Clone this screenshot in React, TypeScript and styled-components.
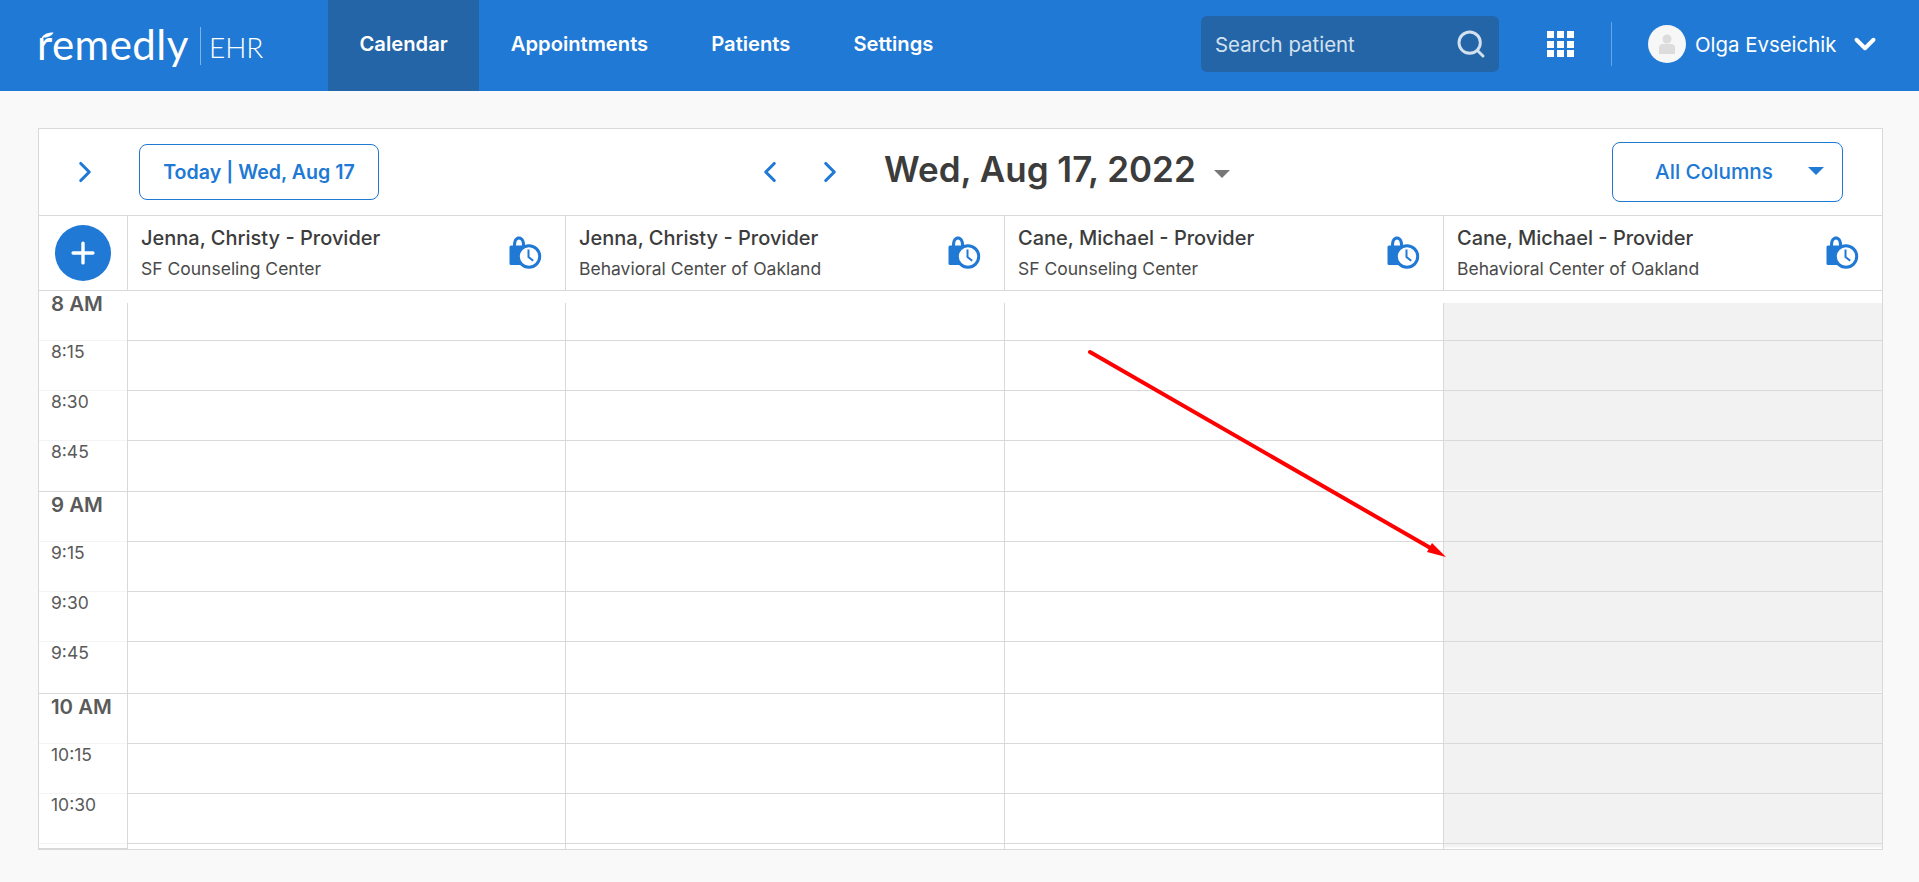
import React from "react";
import styled, { createGlobalStyle } from "styled-components";
import { ChevronLeft, ChevronRight, ChevronDown, Plus, Search } from "lucide-react";

const blue = "#2079d4";
const line = "#d9d9d9";

const Global = createGlobalStyle`
  html, body { margin: 0; padding: 0; background: #f9f9f9; }
  body { font-family: "Inter", "Liberation Sans", sans-serif; color: #3c3c3c; }
  * { box-sizing: border-box; }
`;
const Page = styled.div`position: relative; width: 1919px; height: 882px; overflow: hidden; display: flex; flex-direction: column;`;
const TopBar = styled.header`height: 91px; background: ${blue}; display: flex; align-items: stretch; color: #fff;`;
const Logo = styled.div`width: 328px; display: flex; align-items: center; padding-left: 37px; position: relative;`;
const LogoWord = styled.span`font-family: "Lato", sans-serif; font-size: 42px; font-weight: 400; letter-spacing: 0.5px; line-height: 1; margin-top: -4px;`;
const LogoLeaf = styled.svg`position: absolute; left: 41px; top: 32px;`;
const LogoSep = styled.span`width: 1px; height: 38px; background: #7fb3e6; margin: 0 8px 0 11px;`;
const LogoEhr = styled.span`font-family: "Lato", sans-serif; font-size: 28px; font-weight: 300; line-height: 1; margin-top: 2px;`;
const Nav = styled.nav`display: flex;`;
const NavItem = styled.a<{ $active?: boolean }>`
  display: flex; align-items: center; padding: 0 31.5px 4px; font-size: 20.2px; font-weight: 600;
  background: ${p => (p.$active ? "#2465a8" : "transparent")};
`;
const RightTools = styled.div`margin-left: auto; display: flex; align-items: center; padding-right: 37px;`;
const SearchBox = styled.div`
  width: 298px; height: 56px; background: #2465a8; border-radius: 6px; display: flex; align-items: center;
  justify-content: space-between; padding: 0 12px 0 14px; font-size: 20.4px; color: #d3e1ef; margin-top: -3px;
`;
const GridIcon = styled.div`
  margin: -3px 0 0 48px; width: 27px; height: 26px; display: grid; grid-template-columns: repeat(3, 7px); grid-auto-rows: 7px; gap: 2.5px 3px;
  span { background: #fff; }
`;
const Sep = styled.div`width: 1px; height: 44px; background: #6ba6e0; margin: -3px 36px 0 37px;`;
const Avatar = styled.div`width: 38px; height: 38px; border-radius: 50%; background: #f7f7f7; display: flex; align-items: center; justify-content: center; margin-top: -3px;`;
const UserName = styled.span`font-size: 20.4px; margin: -3px 0 0 9px; width: 142px; white-space: nowrap; font-weight: 400;`;
const UserChevron = styled(ChevronDown)`margin: -3px 0 0 11px;`;

const Main = styled.main`flex: 1; padding: 37px 36px 32px 38px;`;
const Panel = styled.section`height: 722px; border: 1px solid ${line}; background: #fff; display: flex; flex-direction: column;`;
const Toolbar = styled.div`height: 87px; flex: none; border-bottom: 1px solid ${line}; display: flex; align-items: center; position: relative;`;
const ToolChevron = styled.span`color: ${blue}; display: flex;`;
const PanelToggle = styled(ToolChevron)`margin-left: 29px;`;
const OutlineButton = styled.button`
  height: 56px; border: 1px solid ${blue}; border-radius: 8px; background: #fff; color: ${blue};
  font-family: inherit; font-weight: 600; font-size: 19.6px; padding: 0; display: flex; align-items: center; justify-content: center;
`;
const TodayButton = styled(OutlineButton)`width: 240px; margin-left: 37px; padding-bottom: 1px;`;
const Center = styled.div`margin-left: 374px; display: flex; align-items: center;`;
const NextChevron = styled(ToolChevron)`margin-left: 26px;`;
const Title = styled.h1`margin: -6px 0 0 37px; font-size: 35px; font-weight: 600; color: #3c3c3c; white-space: nowrap;`;
const Caret = styled.span<{ $color: string; $w: number }>`
  width: 0; height: 0; border-left: ${p => p.$w}px solid transparent; border-right: ${p => p.$w}px solid transparent;
  border-top: ${p => p.$w}px solid ${p => p.$color};
`;
const TitleCaret = styled(Caret)`margin-left: 18px; margin-top: 3px;`;
const ColumnsButton = styled(OutlineButton)`
  position: absolute; right: 39px; top: 13px; width: 231px; height: 60px; justify-content: flex-start; padding: 0 0 2px 42px; gap: 35px;
  font-weight: 500; font-size: 20.7px;
`;
const columnsTemplate = "88px 438px 439px 439px 1fr";
const Heads = styled.div`height: 75px; flex: none; display: grid; grid-template-columns: ${columnsTemplate}; border-bottom: 1px solid ${line};`;
const AddCell = styled.div`display: flex; align-items: center; justify-content: center;`;
const AddButton = styled.div`width: 56px; height: 56px; border-radius: 50%; background: ${blue}; color: #fff; display: flex; align-items: center; justify-content: center;`;
const HeadCell = styled.div`border-left: 1px solid ${line}; padding: 8px 23px 0 13px; display: flex; justify-content: space-between;`;
const HeadText = styled.div`display: flex; flex-direction: column;`;
const HeadName = styled.div`font-size: 20px; font-weight: 500; line-height: 28px; color: #3c3c3c;`;
const HeadSub = styled.div`font-size: 17.5px; line-height: 24px; margin-top: 5px; color: #4a4a4a;`;
const HeadIcon = styled.svg`margin-top: 12px; flex: none;`;
const Body = styled.div`flex: 1; display: grid; grid-template-columns: ${columnsTemplate}; min-height: 0; overflow: hidden; padding: 12px 0 1px; position: relative;`;
const TimeCol = styled.div`display: flex; flex-direction: column; margin-top: -12px;`;
const TimeCell = styled.div<{ $hour?: boolean; $h: number; $next?: boolean }>`
  height: ${p => p.$h}px; flex: none; padding: ${p => (p.$hour ? "2px" : "0")} 0 0 12px;
  border-bottom: 1px solid ${p => (p.$next ? line : "#f4f4f4")};
  font-size: ${p => (p.$hour ? "20.4px" : "17.5px")}; font-weight: ${p => (p.$hour ? 600 : 400)}; line-height: 22px; color: #5a5a5a;
`;
const Column = styled.div`
  display: flex; flex-direction: column; border-left: 1px solid ${line};
`;
const Slot = styled.div<{ $h: number; $off?: boolean; $hourEnd?: boolean; $last?: boolean }>`
  height: ${p => p.$h}px; flex: none; border-bottom: ${p => (p.$last ? "none" : `1px solid ${line}`)};
  background: ${p => (p.$off ? "#f2f2f2" : "#fff")};
  box-shadow: ${p => (p.$off && p.$hourEnd ? "inset 0 -1px 0 #fafafa" : "none")};
`;
const Arrow = styled.svg`position: absolute; left: 0; top: 0; pointer-events: none;`;

const providers = [
  ["Jenna, Christy - Provider", "SF Counseling Center"],
  ["Jenna, Christy - Provider", "Behavioral Center of Oakland"],
  ["Cane, Michael - Provider", "SF Counseling Center"],
  ["Cane, Michael - Provider", "Behavioral Center of Oakland"],
];
const times = ["8 AM","8:15","8:30","8:45","9 AM","9:15","9:30","9:45","10 AM","10:15","10:30",""];
const heights = [50,50,50,51,50,50,50,52,50,50,50,5];
const slotHeights = [38,50,50,51,50,50,50,52,50,50,50,4];

const LockClock = () => (
  <HeadIcon width="33" height="33" viewBox="0 0 33 33">
    <path d="M0.5 11 a1.5 1.5 0 0 1 1.5-1.5 H4 C4 3 7 0.5 10 0.5 s6 2.5 6.2 9 h2 V29 H2 A1.5 1.5 0 0 1 0.5 27.5 Z M7 9.5 h6 C13 5.5 12 3.5 10 3.5 S7 5.5 7 9.5 Z" fill={blue} fillRule="evenodd"/>
    <circle cx="20" cy="20.5" r="10.7" fill="#fff" stroke={blue} strokeWidth="3"/>
    <path d="M19.5 13.5 V21 l4.7 3.8" fill="none" stroke={blue} strokeWidth="2"/>
  </HeadIcon>
);

export default function App() {
  return (
    <Page>
      <Global />
      <TopBar>
        <Logo>
          <LogoWord>remedly</LogoWord>
          <LogoLeaf width="13" height="8" viewBox="0 0 13 8">
            <path d="M0 8 C1 3 5 0.5 12.5 0.5 C11 4 7 5.5 3 5.5 Z" fill="#fff" />
          </LogoLeaf>
          <LogoSep />
          <LogoEhr>EHR</LogoEhr>
        </Logo>
        <Nav>
          <NavItem $active>Calendar</NavItem>
          <NavItem>Appointments</NavItem>
          <NavItem>Patients</NavItem>
          <NavItem>Settings</NavItem>
        </Nav>
        <RightTools>
          <SearchBox>
            Search patient
            <Search size={32} strokeWidth={2.2} color="#d3e1ef" />
          </SearchBox>
          <GridIcon>{Array.from({ length: 9 }, (_, i) => <span key={i} />)}</GridIcon>
          <Sep />
          <Avatar>
            <svg width="18" height="20" viewBox="0 0 18 20"><circle cx="9" cy="5" r="4.5" fill="#dcdcdc"/><path d="M1 20 V14 a4 4 0 0 1 4-4 h8 a4 4 0 0 1 4 4 V20 Z" fill="#dcdcdc"/></svg>
          </Avatar>
          <UserName>Olga Evseichik</UserName>
          <UserChevron size={34} strokeWidth={2.8} />
        </RightTools>
      </TopBar>
      <Main>
        <Panel>
          <Toolbar>
            <PanelToggle><ChevronRight size={34} strokeWidth={2.2} /></PanelToggle>
            <TodayButton>Today | Wed, Aug 17</TodayButton>
            <Center>
              <ToolChevron><ChevronLeft size={34} strokeWidth={2.2} /></ToolChevron>
              <NextChevron><ChevronRight size={34} strokeWidth={2.2} /></NextChevron>
              <Title>Wed, Aug 17, 2022</Title>
              <TitleCaret $color="#777" $w={8} />
            </Center>
            <ColumnsButton>All Columns<Caret $color={blue} $w={8} /></ColumnsButton>
          </Toolbar>
          <Heads>
            <AddCell><AddButton><Plus size={34} strokeWidth={2.4} /></AddButton></AddCell>
            {providers.map(([n, s], i) => (
              <HeadCell key={i}>
                <HeadText><HeadName>{n}</HeadName><HeadSub>{s}</HeadSub></HeadText>
                <LockClock />
              </HeadCell>
            ))}
          </Heads>
          <Body>
            <TimeCol>
              {times.map((t, i) => (
                <TimeCell key={i} $h={heights[i]} $hour={/AM/.test(t)} $next={i % 4 === 3}>{t}</TimeCell>
              ))}
            </TimeCol>
            {[0, 1, 2, 3].map(c => (
              <Column key={c}>
                {slotHeights.map((h, i) => (
                  <Slot key={i} $h={h} $off={c === 3} $hourEnd={i % 4 === 3} $last={i === slotHeights.length - 1} />
                ))}
              </Column>
            ))}
          </Body>
        </Panel>
      </Main>
      <Arrow width="1919" height="882" viewBox="0 0 1919 882">
        <line x1="1090" y1="352" x2="1434" y2="550" stroke="#fe0000" strokeWidth="4" strokeLinecap="round" />
        <polygon points="1446,557 1427,552 1432,543" fill="#fe0000" />
      </Arrow>
    </Page>
  );
}
